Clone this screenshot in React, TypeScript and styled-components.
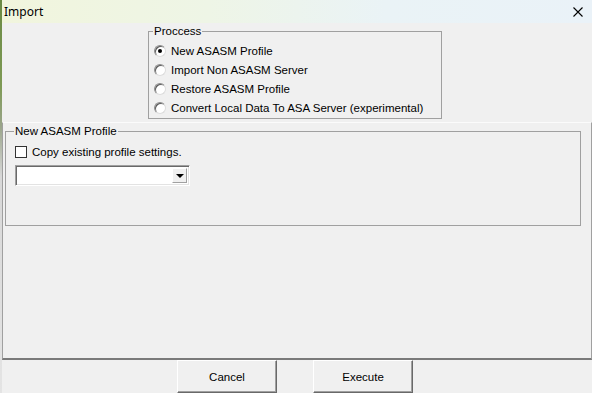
import styled, { createGlobalStyle } from 'styled-components';

const GlobalStyle = createGlobalStyle`
  html, body {
    margin: 0;
    padding: 0;
    overflow: hidden;
    background: #f0f0f0;
  }
  body {
    font-family: "Liberation Sans", Arial, sans-serif;
    font-size: 11.5px;
    color: #000;
  }
`;

const Screen = styled.div`
  display: flex;
  width: 592px;
  height: 393px;
  overflow: hidden;
`;

const DesktopEdge = styled.div`
  width: 2px;
  flex-shrink: 0;
  background: linear-gradient(180deg, #6b8a45 0%, #7e9a55 22%, #9aa58a 32%, #d8d8d8 45%, #e4e4e4 100%);
`;

const Window = styled.div`
  flex: 1;
  display: flex;
  flex-direction: column;
  background: #f0f0f0;
  min-width: 0;
`;

const TitleBar = styled.div`
  height: 23px;
  flex-shrink: 0;
  display: flex;
  align-items: center;
  justify-content: space-between;
  padding: 0 9px 0 2px;
  background: linear-gradient(90deg, #f1f5dd 0%, #eef5e6 35%, #eaf3f6 65%, #eaf2f8 100%);
`;

const Title = styled.span`
  font-family: "Noto Sans", "Open Sans", sans-serif;
  font-size: 12px;
  line-height: 16px;
`;

const TopArea = styled.div`
  padding: 1px 0 3px 146px;
`;

const GroupBox = styled.fieldset<{ $width: number; $padLeft: number; $padBottom: number }>`
  margin: 0;
  min-width: 0;
  width: ${(p) => p.$width}px;
  box-sizing: border-box;
  border: 1px solid #a0a0a0;
  padding: 0 0 ${(p) => p.$padBottom}px ${(p) => p.$padLeft}px;
`;

const Legend = styled.legend`
  padding: 0 1px;
  margin-left: -1px;
  line-height: 14px;
  font-size: 11.5px;
`;

const RadioList = styled.div`
  display: flex;
  flex-direction: column;
  padding-top: 3px;
`;

const RadioRow = styled.label`
  display: flex;
  align-items: center;
  gap: 5px;
  height: 19px;
  white-space: nowrap;
`;

const RadioMark = styled.span<{ $checked: boolean }>`
  width: 12px;
  height: 12px;
  box-sizing: border-box;
  border-radius: 50%;
  border: 1px solid;
  border-color: #8c8c8c #dcdcdc #dcdcdc #8c8c8c;
  box-shadow: inset 1px 1px 0 #5a5a5a;
  background: #fff;
  display: flex;
  align-items: center;
  justify-content: center;

  &::after {
    content: '';
    width: 4px;
    height: 4px;
    border-radius: 50%;
    background: #000;
    visibility: ${(p) => (p.$checked ? 'visible' : 'hidden')};
  }
`;

const Panel = styled.div`
  height: 238px;
  flex-shrink: 0;
  box-sizing: border-box;
  border-top: 1px solid #fbfbfb;
  border-left: 1px solid #a0a0a0;
  border-right: 1px solid #a0a0a0;
  border-bottom: 2px solid #7a7a7a;
  padding: 1px 0 0 2px;
`;

const CheckRow = styled.label`
  display: flex;
  align-items: center;
  gap: 5px;
  height: 15px;
  margin-top: 6px;
  white-space: nowrap;
`;

const CheckBox = styled.span`
  width: 12px;
  height: 12px;
  box-sizing: border-box;
  border: 1px solid #333;
  background: #fff;
`;

const Combo = styled.div`
  margin-top: 6px;
  width: 175px;
  height: 21px;
  box-sizing: border-box;
  background: #fff;
  border: 1px solid;
  border-color: #a0a0a0 #ffffff #ffffff #a0a0a0;
  box-shadow: inset 1px 1px 0 #696969, inset -1px -1px 0 #e3e3e3;
  display: flex;
  justify-content: flex-end;
  padding: 2px;
`;

const DropButton = styled.div`
  width: 15px;
  box-sizing: border-box;
  background: #f0f0f0;
  border: 1px solid;
  border-color: #ffffff #a0a0a0 #a0a0a0 #ffffff;
  display: flex;
  align-items: center;
  justify-content: center;

  &::after {
    content: '';
    border-left: 4px solid transparent;
    border-right: 4px solid transparent;
    border-top: 4px solid #000;
    margin-top: 1px;
  }
`;

const Footer = styled.div`
  display: flex;
  gap: 36px;
  padding-left: 175px;
`;

const DialogButton = styled.button`
  width: 100px;
  height: 33px;
  box-sizing: border-box;
  font-family: "Liberation Sans", Arial, sans-serif;
  font-size: 11.5px;
  color: #000;
  background: #f0f0f0;
  border: 1px solid;
  border-color: #ffffff #696969 #696969 #ffffff;
  box-shadow: inset -1px -1px 0 #a0a0a0;
  padding: 0;
`;

const processes = [
  'New ASASM Profile',
  'Import Non ASASM Server',
  'Restore ASASM Profile',
  'Convert Local Data To ASA Server (experimental)',
];

export default function App() {
  return (
    <>
      <GlobalStyle />
      <Screen>
        <DesktopEdge />
        <Window>
          <TitleBar>
            <Title>Import</Title>
            <svg width="10" height="10" viewBox="0 0 10 10">
              <path d="M0.5 0.5 9.5 9.5 M9.5 0.5 0.5 9.5" stroke="#000" strokeWidth="1.1" fill="none" />
            </svg>
          </TitleBar>
          <TopArea>
            <GroupBox $width={294} $padLeft={5} $padBottom={1}>
              <Legend>Proccess</Legend>
              <RadioList>
                {processes.map((p, i) => (
                  <RadioRow key={p}>
                    <RadioMark $checked={i === 0} />
                    {p}
                  </RadioRow>
                ))}
              </RadioList>
            </GroupBox>
          </TopArea>
          <Panel>
            <GroupBox $width={576} $padLeft={9} $padBottom={39}>
              <Legend>New ASASM Profile</Legend>
              <CheckRow>
                <CheckBox />
                Copy existing profile settings.
              </CheckRow>
              <Combo>
                <DropButton />
              </Combo>
            </GroupBox>
          </Panel>
          <Footer>
            <DialogButton>Cancel</DialogButton>
            <DialogButton>Execute</DialogButton>
          </Footer>
        </Window>
      </Screen>
    </>
  );
}
